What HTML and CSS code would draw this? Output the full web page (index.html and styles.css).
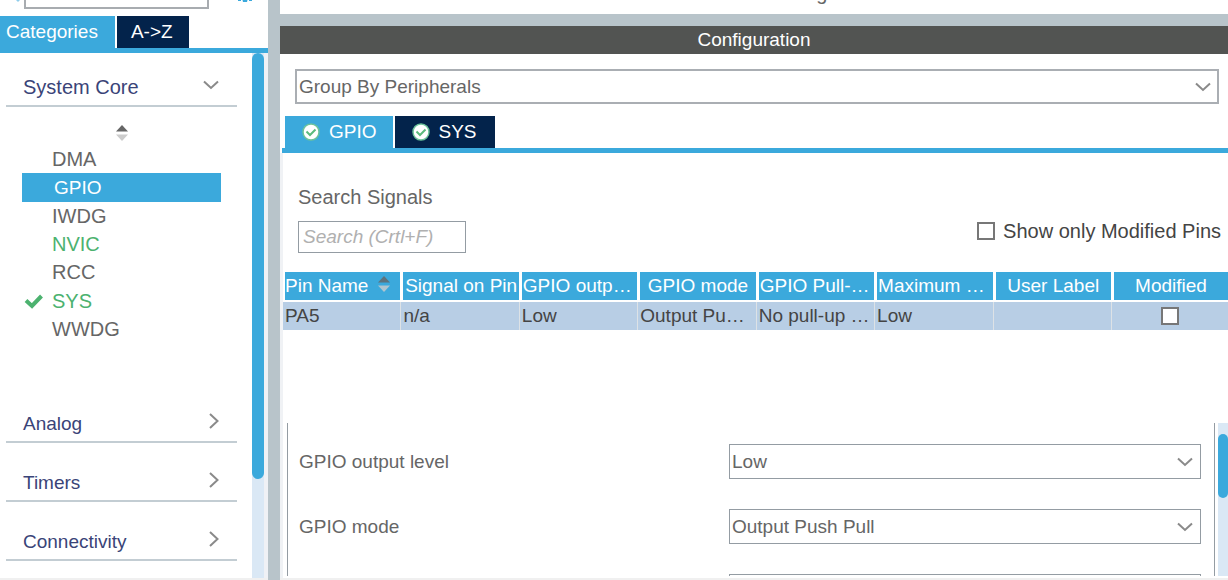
FILE: index.html
```html
<!DOCTYPE html>
<html lang="en">

<head>
    <meta charset="UTF-8">
    <meta name="viewport" content="width=device-width, initial-scale=1.0">
    <title>Pinout &amp; Configuration</title>
    <link rel="stylesheet" href="styles.css">
</head>

<body>
    <!-- shared icons -->
    <svg class="sprite" aria-hidden="true">
        <symbol id="chevron-down" viewBox="0 0 16 10">
            <path d="M1 1.5 L8 8 L15 1.5" fill="none" stroke="#8a8a8a" stroke-width="2" />
        </symbol>
        <symbol id="chevron-right" viewBox="0 0 10 16">
            <path d="M1 1 L8.500 8 L1 15" fill="none" stroke="#8a8a8a" stroke-width="2" />
        </symbol>
        <symbol id="sort" viewBox="0 0 12 16">
            <path d="M0 6.500 L6 0 L12 6.500 Z" fill="#666" />
            <path class="sort-down" d="M0 9.500 L12 9.500 L6 16 Z" />
        </symbol>
        <symbol id="ok" viewBox="0 0 18 18">
            <circle cx="9" cy="9" r="8" fill="#fff" stroke="#6cc39a" stroke-width="1.500" />
            <path d="M4.500 8.500 L8 12 L13.500 6.500" fill="none" stroke="#5cba7c" stroke-width="2" />
        </symbol>
    </svg>

    <div class="app">
        <div class="sidebar">
            <div class="finder">
                <svg class="finder-mark" width="4" height="2" viewBox="0 0 4 2"><path d="M0 0 H4 L2 2 Z" fill="#8fcdec" /></svg>
                <input class="finder-input" type="text" aria-label="Search">
                <svg class="finder-gear" width="14" height="3" viewBox="0 0 14 3"><path d="M0 0 H3 V1 H0 Z M4.500 0 H9.500 L9 2 H5 Z M11 0 H14 V1 H11 Z" fill="#3ba9dc" /></svg>
            </div>
            <div class="tabs">
                <button class="tab active" type="button">Categories</button>
                <button class="tab" type="button">A-&gt;Z</button>
            </div>
            <div class="side-body">
                <div class="categories">
                    <button class="category open" type="button">
                        System Core
                        <svg width="16" height="10"><use href="#chevron-down" /></svg>
                    </button>
                    <div class="peripherals">
                        <svg class="sort-icon" width="12" height="16"><use href="#sort" /></svg>
                        <ul class="peripheral-list">
                            <li><a href="#dma">DMA</a></li>
                            <li class="selected"><a href="#gpio">GPIO</a></li>
                            <li><a href="#iwdg">IWDG</a></li>
                            <li class="used"><a href="#nvic">NVIC</a></li>
                            <li><a href="#rcc">RCC</a></li>
                            <li class="used">
                                <svg class="tick" width="19" height="15" viewBox="0 0 19 15"><path d="M2 6.500 L8 12 L17.500 2" fill="none" stroke="#4cb26f" stroke-width="4" /></svg>
                                <a href="#sys">SYS</a>
                            </li>
                            <li><a href="#wwdg">WWDG</a></li>
                        </ul>
                    </div>
                    <button class="category" type="button">
                        Analog
                        <svg width="10" height="16"><use href="#chevron-right" /></svg>
                    </button>
                    <button class="category" type="button">
                        Timers
                        <svg width="10" height="16"><use href="#chevron-right" /></svg>
                    </button>
                    <button class="category" type="button">
                        Connectivity
                        <svg width="10" height="16"><use href="#chevron-right" /></svg>
                    </button>
                </div>
                <div class="scrollbar"><div class="thumb thumb-side"></div></div>
            </div>
        </div>

        <div class="content">
            <div class="mode-title">GPIO Mode and Configuration</div>
            <div class="config-title">Configuration</div>
            <div class="config">
                <div class="select group-by">
                    <select aria-label="Group by">
                        <option>Group By Peripherals</option>
                    </select>
                    <svg width="16" height="10"><use href="#chevron-down" /></svg>
                </div>
                <div class="tabs config-tabs">
                    <button class="tab active" type="button"><svg width="18" height="18"><use href="#ok" /></svg>GPIO</button>
                    <button class="tab" type="button"><svg width="18" height="18"><use href="#ok" /></svg>SYS</button>
                </div>

                <div class="config-body">
                    <div class="filters">
                        <div class="search">
                            <label for="search">Search Signals</label>
                            <input id="search" type="text" placeholder="Search (Crtl+F)">
                        </div>
                        <label class="modified-only"><input class="check" type="checkbox">Show only Modified Pins</label>
                    </div>

                    <table class="pins">
                        <thead>
                            <tr>
                                <th class="sorted">Pin Name <svg width="12" height="16"><use href="#sort" /></svg></th>
                                <th>Signal on Pin</th>
                                <th>GPIO output level</th>
                                <th>GPIO mode</th>
                                <th>GPIO Pull-up/Pull-down</th>
                                <th>Maximum output speed</th>
                                <th>User Label</th>
                                <th>Modified</th>
                            </tr>
                        </thead>
                        <tbody>
                            <tr>
                                <td>PA5</td>
                                <td>n/a</td>
                                <td>Low</td>
                                <td>Output Push Pull</td>
                                <td>No pull-up and no pull-down</td>
                                <td>Low</td>
                                <td></td>
                                <td class="center"><input class="check" type="checkbox" aria-label="Modified"></td>
                            </tr>
                        </tbody>
                    </table>

                    <div class="settings">
                        <div class="fields">
                            <label for="level">GPIO output level</label>
                            <div class="select">
                                <select id="level"><option>Low</option></select>
                                <svg width="16" height="10"><use href="#chevron-down" /></svg>
                            </div>
                            <label for="mode">GPIO mode</label>
                            <div class="select">
                                <select id="mode"><option>Output Push Pull</option></select>
                                <svg width="16" height="10"><use href="#chevron-down" /></svg>
                            </div>
                            <span></span>
                            <div class="select">
                                <select aria-label="GPIO Pull-up/Pull-down"></select>
                            </div>
                        </div>
                        <div class="scrollbar"><div class="thumb thumb-fields"></div></div>
                    </div>
                </div>
            </div>
        </div>
    </div>
</body>

</html>
```
FILE: styles.css
```css
* {
    box-sizing: border-box;
    padding: 0;
    margin: 0;
}

body,
button,
input,
select {
    font-family: "Liberation Sans", Arial, sans-serif;
    font-size: 19px;
    color: #666;
}

body {
    background: #b8c4ca;
}

button {
    border: 0;
    background: none;
}

a {
    color: inherit;
    text-decoration: none;
}

.sprite {
    display: none;
}

.app {
    display: grid;
    grid-template-columns: 268px 1fr;
    gap: 12px;
    height: 100vh;
    overflow: hidden;
}

/* tabs */
.tabs {
    display: flex;
    gap: 2px;
    border-bottom: 5px solid #3ba9dc;
}

.tab {
    display: flex;
    align-items: center;
    gap: 9px;
    height: 32px;
    padding: 0 15px;
    background: #03234b;
    color: #fff;
}

.tab.active {
    background: #3ba9dc;
}

/* sidebar */
.sidebar {
    display: flex;
    flex-direction: column;
    min-height: 0;
    background: #fff;
    border-bottom: 2px solid #f0f0f0;
}

.finder {
    display: flex;
    height: 16px;
    padding-left: 16px;
}

.finder-input {
    width: 185px;
    height: 9px;
    margin: 0 29px 0 4px;
    border: 2px solid #a8acb0;
    border-top: 0;
}

.sidebar .tab {
    padding: 0 16px 0 14px;
}

.sidebar .tab.active {
    padding: 0 17px 0 6px;
}

.side-body {
    display: flex;
    flex: 1;
    min-height: 0;
    border-right: 4px solid #eff1f5;
}

.categories {
    flex: 1;
    padding: 0 15px 0 6px;
    overflow: hidden;
}

.category {
    display: flex;
    align-items: center;
    justify-content: space-between;
    width: 100%;
    height: 59px;
    padding: 22px 18px 0 17px;
    border-bottom: 2px solid #c3cdd3;
    color: #3a4478;
}

.category.open {
    height: 54px;
    padding-top: 17px;
    font-size: 20px;
}

.category svg {
    margin-bottom: 6px;
}

.peripherals {
    padding: 18px 16px 40px;
}

.sort-icon {
    display: block;
    margin: 0 auto 4px;
}

.sort-down {
    fill: #ccc;
}

.peripheral-list {
    display: grid;
    grid-auto-rows: 1fr;
    height: 199px;
    font-size: 20px;
    list-style: none;
}

.peripheral-list li {
    display: flex;
    align-items: center;
    padding-left: 30px;
}

.peripheral-list .selected {
    padding-left: 32px;
    background: #3ba9dc;
    color: #fff;
    font-size: 19px;
}

.peripheral-list .used {
    color: #4cb26f;
}

.tick {
    margin: 0 9px 0 -28px;
}

/* scrollbars */
.scrollbar {
    width: 12px;
    background: #dae8f5;
}

.thumb {
    border-radius: 6px;
    background: #3ba9dc;
}

.thumb-side {
    height: 426px;
}

.thumb-fields {
    height: 64px;
    margin-top: 11px;
}

/* content */
.content {
    display: flex;
    flex-direction: column;
    min-width: 0;
    min-height: 0;
}

.mode-title {
    display: flex;
    justify-content: center;
    align-items: flex-end;
    height: 14px;
    margin-bottom: 12px;
    padding-bottom: 10px;
    overflow: hidden;
    background: #fff;
    font-size: 20px;
    line-height: 22px;
}

.config-title {
    background: #525452;
    color: #fff;
    line-height: 28px;
    text-align: center;
}

.config {
    display: flex;
    flex: 1;
    flex-direction: column;
    min-height: 0;
    padding-top: 15px;
    background: #fff;
    border-bottom: 2px solid #f0f0f0;
}

.select {
    position: relative;
}

.select select {
    display: block;
    width: 100%;
    height: 35px;
    padding-left: 2px;
    border: 1px solid #949ca3;
    background: #fff;
    appearance: none;
}

.select svg {
    position: absolute;
    top: 13px;
    right: 8px;
    pointer-events: none;
}

.group-by {
    margin: 0 9px 12px 15px;
}

.group-by select {
    border: 2px solid #aaaeb3;
}

.config-tabs {
    margin-left: 2px;
    padding-left: 3px;
}

.config-tabs .tab {
    min-width: 100px;
    padding: 0 16px 0 17px;
}

.config-body {
    display: flex;
    flex: 1;
    flex-direction: column;
    min-height: 0;
    border-left: 3px solid #f0f2f5;
}

.filters {
    display: flex;
    justify-content: space-between;
    padding: 32px 7px 19px 15px;
}

.search label {
    display: block;
    margin-bottom: 12px;
    font-size: 20px;
    line-height: 24px;
}

.search input {
    display: block;
    width: 168px;
    height: 32px;
    padding-left: 4px;
    border: 1px solid #949ca3;
}

.search input::placeholder {
    color: #b0b0b0;
    font-style: italic;
}

.modified-only {
    display: flex;
    align-items: center;
    align-self: flex-end;
    gap: 8px;
    height: 44px;
    color: #444;
    font-size: 20px;
}

.check {
    width: 18px;
    height: 18px;
    border: 2px solid #777;
    background: #fff;
    appearance: none;
}

/* pin table */
.pins {
    width: 100%;
    table-layout: fixed;
    border-spacing: 0;
}

.pins th,
.pins td {
    height: 28px;
    overflow: hidden;
    text-overflow: ellipsis;
    white-space: nowrap;
    line-height: 28px;
}

.pins th {
    padding: 0 1px;
    border: solid #fff;
    border-width: 0 1px 2px 2px;
    background: #3ba9dc;
    color: #fff;
    font-weight: normal;
    height: 30px;
}

.pins th:last-child {
    width: 116px;
    border-right: 0;
}

.pins .sorted {
    padding: 0;
    text-align: left;
}

.pins .sorted svg {
    margin-left: 4px;
    opacity: 0.8;
}

.pins .sorted .sort-down {
    fill: #4c93b5;
}

.pins td {
    padding: 0 4px 0 2px;
    border-right: 1px solid #dde2e6;
    background: #b8cee5;
    color: #444;
}

.pins .center {
    padding: 0;
    border-right: 0;
}

.pins .check {
    display: block;
    margin: 0 auto;
}

/* parameters of the selected pin */
.settings {
    display: flex;
    flex: 1;
    gap: 3px;
    min-height: 0;
    margin: 93px 0 2px 4px;
    overflow: hidden;
}

.settings .scrollbar {
    width: 10px;
}

.fields {
    display: grid;
    flex: 1;
    grid-template-columns: 430px 1fr;
    align-content: start;
    align-items: center;
    row-gap: 30px;
    padding: 21px 13px 0 11px;
    border: solid #949ca3;
    border-width: 0 1px;
}
```
